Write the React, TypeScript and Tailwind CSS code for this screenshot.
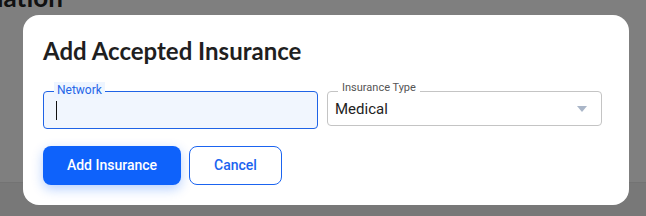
import { useState } from "react";

/** Faded page behind the modal. */
function BackdropPage() {
  return (
    <div className="flex h-[216px] flex-col bg-white">
      <div className="h-[182px] overflow-hidden">
        <h2 className="-mt-[19px] -ml-[3px] font-['Lato',sans-serif] text-[26px] font-bold leading-[32px] text-[#222]">
          lation
        </h2>
      </div>
      <div className="flex-1 border-t border-[#e6e6e6] bg-[#f0f0f0]" />
    </div>
  );
}

export default function App() {
  const [network, setNetwork] = useState("");

  return (
    <div className="relative h-[216px] w-[646px] overflow-hidden font-['Roboto',sans-serif]">
      <BackdropPage />
      <div className="absolute inset-0 bg-black/50" />

      {/* Dialog */}
      <div className="absolute left-[23px] top-[15px] h-[190px] w-[606px] rounded-2xl bg-white pl-5 pr-[27px] pt-[21px]">
        <h1 className="font-['Lato',sans-serif] text-[24px] font-bold leading-[30px] text-[#1f1f1f]">
          Add Accepted Insurance
        </h1>

        <div className="mt-[25px] flex items-start gap-[9px]">
          {/* Network (focused) */}
          <label className="relative block h-[38px] w-[275px] rounded-[4px] border border-[#1f63e6] bg-[#f1f6fe]">
            <span className="absolute -top-[10px] left-[10px] bg-[#eef5ff] px-[3px] text-[12px] leading-[16px] text-[#2566e8]">
              Network
            </span>
            <input
              value={network}
              onChange={(e) => setNetwork(e.target.value)}
              className="h-full w-full bg-transparent pl-3 text-[15px] text-[#222] outline-none"
            />
            <span className="absolute left-[12px] top-[9px] h-[19px] w-px bg-[#111]" />
          </label>

          {/* Insurance type select */}
          <div className="relative flex h-[35px] w-[275px] items-center rounded-[4px] border border-[#c4c4c4] pl-[7px] pr-[14px]">
            <span className="absolute -top-[11px] left-[10px] bg-white px-[4px] text-[11px] leading-[14px] text-[#555]">
              Insurance Type
            </span>
            <span className="flex-1 pt-[1px] text-[15px] text-[#222]">Medical</span>
            <svg width="10" height="6" viewBox="0 0 10 6" className="mt-[1px]">
              <path d="M0 0h10L5 6z" fill="#aab6c8" />
            </svg>
          </div>
        </div>

        <div className="mt-[17px] flex gap-2">
          <button className="h-[39px] w-[138px] rounded-lg bg-[#0e62fb] text-[14px] font-medium text-white shadow-[0_4px_12px_rgba(14,98,251,0.3)]">
            Add Insurance
          </button>
          <button className="h-[39px] w-[93px] rounded-lg border border-[#1b64f0] bg-white text-[14px] font-medium text-[#1b64f0]">
            Cancel
          </button>
        </div>
      </div>
    </div>
  );
}
